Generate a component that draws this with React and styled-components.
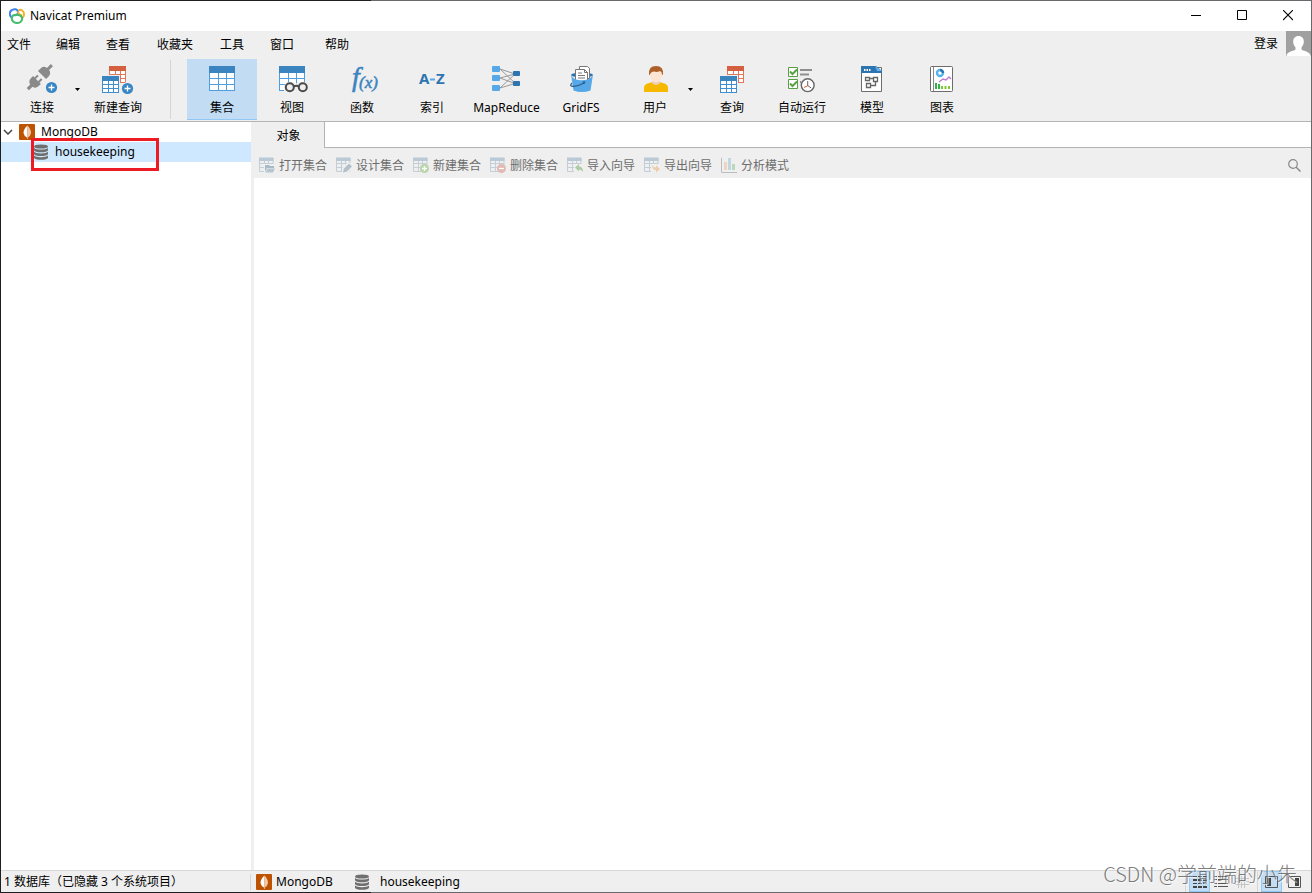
import React, { useState } from 'react';
import styled, { createGlobalStyle } from 'styled-components';

const MENUS = ['文件', '编辑', '查看', '收藏夹', '工具', '窗口', '帮助'];

function Table({ x, y, w, h, head, line, color, headColor }) {
  const rows = (h - head) / 3;
  const cols = w / 3;
  return (
    <g shapeRendering="crispEdges">
      <rect x={x} y={y} width={w} height={h} fill={color} />
      {[0, 1, 2].map((r) =>
        [0, 1, 2].map((c) => (
          <rect
            key={`${r}-${c}`}
            x={x + c * cols + line}
            y={y + head + r * rows}
            width={cols - line * (c === 2 ? 2 : 1)}
            height={rows - line}
            fill="#fff"
          />
        ))
      )}
      <rect x={x} y={y} width={w} height={head} fill={headColor} />
    </g>
  );
}

function PlusBadge({ x, y }) {
  return (
    <g>
      <circle cx={x} cy={y} r="5.6" fill="#3a86c4" />
      <path d={`M${x - 3} ${y}h6M${x} ${y - 3}v6`} stroke="#fff" strokeWidth="1.3" />
    </g>
  );
}

function QueryTables({ x }) {
  return (
    <g>
      <Table x={x + 7} y={3} w={17} h={17} head={5} line={1} color="#e2765a" headColor="#d4603f" />
      <rect x={x - 1} y={12} width={19} height={19} fill="#efefef" />
      <Table x={x} y={13} w={17} h={17} head={5} line={1} color="#3f8fd0" headColor="#3a84bf" />
    </g>
  );
}

function ConnectIcon() {
  return (
    <ToolSvg viewBox="0 0 32 32">
      <g transform="translate(11 17) rotate(-45)" fill="#8a8a8a">
        <path d="M0-5.5V5.5H-3.500A5 5 0 0 1-8 1.600H-13V-1.600H-8A5 5 0 0 1-3.500-5.500zM-.5-3.600H4v2H-.5zM-.5 1.600H4v2H-.5z" />
      </g>
      <g transform="translate(16 12) rotate(-45)" fill="#8a8a8a">
        <path d="M0-5.700V5.700H4A5 5 0 0 0 8.500 1.500H14V-1.500H8.500A5 5 0 0 0 4-5.700z" />
      </g>
      <PlusBadge x={25.500} y={24.500} />
    </ToolSvg>
  );
}

function NewQueryIcon() {
  return (
    <ToolSvg viewBox="0 0 32 32">
      <QueryTables x={0} />
      <circle cx="25.500" cy="25.500" r="6.500" fill="#efefef" />
      <PlusBadge x={25.500} y={25.500} />
    </ToolSvg>
  );
}

function CollectionIcon() {
  return (
    <ToolSvg viewBox="0 0 32 32">
      <Table x={3} y={3} w={26} h={25} head={7} line={1} color="#4f9edf" headColor="#3a84bf" />
    </ToolSvg>
  );
}

function ViewIcon() {
  return (
    <ToolSvg viewBox="0 0 32 32">
      <Table x={3} y={3} w={26} h={25} head={7} line={1} color="#4f9edf" headColor="#3a84bf" />
      <path d="M8 29v-6l3-4h6l2.500 2 2.500-2h8v10z" fill="#efefef" />
      <g fill="#efefef" stroke="#4a4a4a" strokeWidth="2">
        <circle cx="13.800" cy="24.300" r="4" />
        <circle cx="26.800" cy="24.300" r="4" />
        <path d="M17.800 23.500q2.500-1.500 5 0" />
      </g>
    </ToolSvg>
  );
}

function FunctionIcon() {
  return (
    <ToolSvg viewBox="0 0 32 32" fill="#3a84bf" stroke="#3a84bf" strokeWidth="0.500">
      <SerifText x="6" y="23" fontSize="28">f</SerifText>
      <SerifText x="13" y="25" fontSize="17">(x)</SerifText>
    </ToolSvg>
  );
}

function IndexIcon() {
  return (
    <ToolSvg viewBox="0 0 32 32" fill="#2d75b0">
      <SansText x="3" y="21" fontSize="15">A</SansText>
      <path d="M14 16.500h5" stroke="#56a8e8" strokeWidth="2" />
      <SansText x="20" y="21" fontSize="15">Z</SansText>
    </ToolSvg>
  );
}

function MapReduceIcon() {
  return (
    <ToolSvg viewBox="0 0 32 32">
      <path
        d="M9 6l15 5M9 6l15 14M9 15l15-4M9 15l15 5.500M9 25l15-14M9 25l15-4.500"
        stroke="#999"
        fill="none"
      />
      <g fill="#56a8e8">
        <rect x="1" y="3" width="8" height="6" rx="1" />
        <rect x="1" y="12" width="8" height="6" rx="1" />
        <rect x="1" y="22" width="8" height="6" rx="1" />
      </g>
      <g fill="#2d75b0">
        <rect x="22" y="8" width="7" height="5" rx="1" />
        <rect x="22" y="18" width="7" height="5" rx="1" />
      </g>
    </ToolSvg>
  );
}

function GridFsIcon() {
  return (
    <ToolSvg viewBox="0 0 32 32">
      <ellipse cx="17" cy="12" rx="11" ry="2.500" fill="#2d75b0" />
      <g fill="#fff" stroke="#777">
        <path d="M14.500 3.500h8l2 2v10h-10z" />
        <path d="M10.500 6.500h9l3 3v9h-12z" />
        <path d="M19.500 6.500v3h3M13 10h4M13 12.500h7M13 15h7" fill="none" />
      </g>
      <path d="M6 11.500c1 3 3 4 5 5 3 1 8 1 11.500 0 2-1 4-2 5.500-5l-2.500 16q-8.500 3-17 0z" fill="#56a8e8" />
      <path d="M7 20c-5 5 5 4 12 0" fill="none" stroke="#2d5f8a" strokeWidth="1.200" />
      <circle cx="19" cy="19.500" r="1.300" fill="#2d5f8a" />
    </ToolSvg>
  );
}

function UserIcon() {
  return (
    <ToolSvg viewBox="0 0 32 32">
      <path d="M5 29v-4q0-4 5-5l4-1h6l4 1q5 1 5 5v4z" fill="#f6b900" />
      <path d="M13 16h8v4q-4 4-8 0z" fill="#f0cdb5" />
      <path d="M11 7h12v6q-1 6.500-6 6.500T11 13z" fill="#fde4d3" />
      <path d="M10 12q-1-9 7-9t7 9l-1-.5q0-3-2-3.500-3 1.500-6 .5-3 0-4 3z" fill="#ad6129" />
    </ToolSvg>
  );
}

function QueryIcon() {
  return (
    <ToolSvg viewBox="0 0 32 32">
      <QueryTables x={4} />
    </ToolSvg>
  );
}

function AutomationIcon() {
  return (
    <ToolSvg viewBox="0 0 32 32" fill="none">
      <g stroke="#58a043">
        <path d="M2.500 4.500h9v9h-9zM2.500 16.500h9v9h-9z" fill="#fff" />
        <path d="M4 8.500l2.500 2.500 4.500-4.500M4 20.500l2.500 2.500 4.500-4.500" strokeWidth="2" />
      </g>
      <path d="M14 7h12M14 11.500h9M14 19h3" stroke="#8f8f8f" strokeWidth="2" />
      <circle cx="21.700" cy="22.200" r="7.500" fill="#efefef" />
      <circle cx="21.700" cy="22.200" r="6.400" fill="#fff" stroke="#666" strokeWidth="1.400" />
      <path d="M21.700 18v4.500l3.500 2.500" stroke="#666" />
      <path d="M22 22.500l-4 2" stroke="#e0533c" />
    </ToolSvg>
  );
}

function ModelIcon() {
  return (
    <ToolSvg viewBox="0 0 32 32" fill="none">
      <path d="M5.500 4.500h20v24h-20z" fill="#fff" stroke="#6d6d6d" />
      <path d="M5 3h15l6 5v2H5z" fill="#2d75b0" />
      <path d="M19 3l7 5h-5z" fill="#63b3f0" />
      <path d="M8 7h1.500M10.500 7H12M13 7h1.500" stroke="#fff" strokeWidth="2" />
      <path
        d="M9.500 14.500h4v3h-4zM17.500 14.500h4v4h-4zM10.500 20.500h4v4h-4zM13.500 15.500h4M15 22.500h4.500v-4"
        stroke="#666"
        strokeWidth="1.300"
      />
    </ToolSvg>
  );
}

function ChartIcon() {
  return (
    <ToolSvg viewBox="0 0 32 32" fill="none">
      <rect x="4.500" y="3.500" width="22" height="25" rx="1" fill="#fff" stroke="#6d6d6d" />
      <path d="M7.500 4v24" stroke="#8a8a8a" />
      <circle cx="14" cy="10" r="3" stroke="#56b4ee" strokeWidth="2.400" />
      <path d="M14 7a3 3 0 0 1 3 3" stroke="#2d75b0" strokeWidth="2.400" />
      <path d="M13 19l4-3 3 1 3-3 2 2" stroke="#c178d0" strokeWidth="1.400" />
      <path d="M10 26v-6M13 26v-5" stroke="#2fb34a" strokeWidth="2" />
      <path d="M16 26v-3M19.500 26v-3M23 26v-3" stroke="#79cc2c" strokeWidth="2" />
    </ToolSvg>
  );
}

function MongoIcon() {
  return (
    <SmallSvg viewBox="0 0 16 16">
      <rect width="16" height="16" rx="1" fill="#bd5200" />
      <path d="M8.500 1.500Q4.500 5 4.500 9q.5 3 3.500 4.500V15h.5z" fill="#fff" />
      <path d="M8.500 1.500Q12 5 12 9q-.5 3-3.200 4.500L8.500 15z" fill="#f3c8a8" />
    </SmallSvg>
  );
}

function DatabaseIcon() {
  return (
    <SmallSvg viewBox="0 0 16 16" fill="#6f6f6f">
      <path d="M1 2.500Q1 .5 8 .5t7 2-7 2-7-2z" />
      <path d="M1 4q2 1.600 7 1.600T15 4v2.300q-1 2-7 2t-7-2z" />
      <path d="M1 7.800q2 1.600 7 1.600t7-1.600v2.300q-1 2-7 2t-7-2z" />
      <path d="M1 11.600q2 1.600 7 1.600t7-1.600v2.100q-1 2-7 2t-7-2z" />
    </SmallSvg>
  );
}

// every object action shares the faded table, only the corner mark differs
function ActionIcon({ mark }) {
  if (mark === 'analyse') {
    return (
      <SmallSvg viewBox="0 0 16 16">
        <path d="M.5 1v14.500H16" fill="none" stroke="#bcbcbc" />
        <path d="M3 5h3v8H3z" fill="#efd5bf" />
        <path d="M7 1h3v12H7z" fill="#bfd6e3" />
        <path d="M11 7h3v6h-3z" fill="#bcd8ba" />
      </SmallSvg>
    );
  }
  return (
    <SmallSvg viewBox="0 0 16 16">
      <path d="M.5 1v13.500H14V1M.5 10.500H14M5.500 3v11.500M9.500 3v11.500M.5 6.500H14" fill="none" stroke="#c3ced6" />
      <path d="M0 .5h14.500V4H0z" fill="#b9c9d5" />
      {mark === 'open' && (
        <g>
          <path d="M5 7h11v9H5z" fill="#efefef" />
          <path d="M6 8h4l1 1h4v2H8l-2 4z" fill="#a8bac6" />
          <path d="M8.500 11.500H16L14 15.500H6.500z" fill="#b5c6d2" />
        </g>
      )}
      {mark === 'design' && (
        <g>
          <path d="M6 16v-5l5-5h5v6l-4 4z" fill="#efefef" />
          <path d="M7 15.500l1-4 5-5 3 3-5 5z" fill="#b3c0ca" />
        </g>
      )}
      {mark === 'new' && (
        <g>
          <circle cx="11.500" cy="11.500" r="4.500" fill="#b9d5a9" />
          <path d="M9 11.500h5M11.500 9v5" stroke="#fff" strokeWidth="1.300" />
        </g>
      )}
      {mark === 'delete' && (
        <g>
          <circle cx="11.500" cy="11.500" r="4.500" fill="#e3b9b4" />
          <path d="M9 11.500h5" stroke="#fff" strokeWidth="1.300" />
        </g>
      )}
      {mark === 'import' && (
        <g>
          <path d="M7 7h9v9H7z" fill="#efefef" />
          <path d="M8 10.500l4-3.500v2.500q4 0 4 5.500-1-2.500-4-2.500v2z" fill="#aecba3" />
        </g>
      )}
      {mark === 'export' && (
        <g>
          <path d="M7 7h9v9H7z" fill="#efefef" />
          <path d="M16 12l-4 3.500V13q-4 0-4-5 1 2.500 4 2.500v-2z" fill="#ecccaa" />
        </g>
      )}
    </SmallSvg>
  );
}

const TOOLS = [
  { label: '集合', icon: CollectionIcon },
  { label: '视图', icon: ViewIcon },
  { label: '函数', icon: FunctionIcon },
  { label: '索引', icon: IndexIcon },
  { label: 'MapReduce', icon: MapReduceIcon, width: 79 },
  { label: 'GridFS', icon: GridFsIcon },
  { label: '用户', icon: UserIcon, split: true },
  { label: '查询', icon: QueryIcon },
  { label: '自动运行', icon: AutomationIcon },
  { label: '模型', icon: ModelIcon },
  { label: '图表', icon: ChartIcon },
];

const ACTIONS = [
  { label: '打开集合', mark: 'open' },
  { label: '设计集合', mark: 'design' },
  { label: '新建集合', mark: 'new' },
  { label: '删除集合', mark: 'delete' },
  { label: '导入向导', mark: 'import' },
  { label: '导出向导', mark: 'export' },
  { label: '分析模式', mark: 'analyse' },
];

function SplitTool({ label, icon: Icon }) {
  return (
    <SplitGroup>
      <ToolButton $width={66}>
        <Icon />
        <ToolLabel>{label}</ToolLabel>
      </ToolButton>
      <CaretButton aria-label={`${label} ▾`}>
        <svg width="5" height="3" viewBox="0 0 5 3"><path d="M0 0h5L2.500 3z" /></svg>
      </CaretButton>
    </SplitGroup>
  );
}

function App() {
  const [tool, setTool] = useState('集合');

  return (
    <Frame>
      <GlobalStyle />
      <TitleBar>
        <SmallSvg viewBox="0 0 16 16" fill="none" strokeWidth="2">
          <path d="M3 9.500C0 8 0 3.500 3 2c2.500-1.500 5.500-1 6 2 .3 2-1.500 3-3 3.500" stroke="#3f84f0" />
          <path d="M9.500 2.500C12 .8 15 3 15 6c0 2-1 3.500-2.500 4M9 3.500c0 2 2 3.500 4 4" stroke="#f3b32c" />
          <path d="M4 7.500C1.500 10 3 15 8 15c4.500 0 6.500-4 4-7-2-1-5.500-1.500-8-.5z" stroke="#43bd6b" />
        </SmallSvg>
        <AppName>Navicat Premium</AppName>
        <WindowButton aria-label="最小化">
          <svg width="10" height="12"><path d="M0 5.500h10" stroke="#000" /></svg>
        </WindowButton>
        <WindowButton aria-label="最大化">
          <svg width="10" height="12"><path d="M.5.5h9v9h-9z" fill="none" stroke="#000" /></svg>
        </WindowButton>
        <WindowButton aria-label="关闭">
          <svg width="10" height="12"><path d="M0 0l10 10M10 0L0 10" stroke="#000" strokeWidth="1.100" /></svg>
        </WindowButton>
      </TitleBar>

      <MenuBar>
        <MenuList>
          {MENUS.map((menu) => (
            <MenuButton key={menu}>{menu}</MenuButton>
          ))}
        </MenuList>
        <MenuButton>登录</MenuButton>
        <Avatar viewBox="0 0 25 25">
          <rect width="25" height="25" fill="#a0a0a0" />
          <path d="M12.500 5c3.500 0 5.500 2.500 5.300 6-.1 2.500-1.300 4-2.300 5.500v2c1 1.500 7.500 1.500 9 5.500v1h-24v-1c1.500-4 8-4 9-5.500v-2c-1-1.500-2.200-3-2.300-5.500C7 7.500 9 5 12.500 5z" fill="#fff" />
        </Avatar>
      </MenuBar>

      <Toolbar>
        <SplitTool label="连接" icon={ConnectIcon} />
        <ToolButton $width={68}>
          <NewQueryIcon />
          <ToolLabel>新建查询</ToolLabel>
        </ToolButton>
        <ToolDivider />
        {TOOLS.map(({ label, icon: Icon, width, split }) =>
          split ? (
            <SplitTool key={label} label={label} icon={Icon} />
          ) : (
            <ToolButton
              key={label}
              $width={width}
              $active={tool === label}
              aria-pressed={tool === label}
              onClick={() => setTool(label)}
            >
              <Icon />
              <ToolLabel>{label}</ToolLabel>
            </ToolButton>
          )
        )}
      </Toolbar>

      <Body>
        <Sidebar>
          <TreeRow $level={0}>
            <Chevron viewBox="0 0 10 6"><path d="M1 1l4 4 4-4" fill="none" stroke="#444" strokeWidth="1.500" /></Chevron>
            <MongoIcon />
            <span>MongoDB</span>
          </TreeRow>
          <TreeRow $level={1} $selected>
            <DatabaseIcon />
            <span>housekeeping</span>
          </TreeRow>
          <Highlight />
        </Sidebar>

        <Content>
          <TabStrip>
            <Tab>对象</Tab>
            <TabFiller />
          </TabStrip>
          <ActionBar>
            {ACTIONS.map(({ label, mark }) => (
              <ActionButton key={label}>
                <ActionIcon mark={mark} />
                <ActionLabel>{label}</ActionLabel>
              </ActionButton>
            ))}
            <SearchButton aria-label="搜索">
              <svg width="13" height="13" fill="none" stroke="#8a8a8a">
                <circle cx="5" cy="5" r="4.300" strokeWidth="1.200" />
                <path d="M8 8l4.500 4.500" strokeWidth="1.500" />
              </svg>
            </SearchButton>
          </ActionBar>
          <ObjectPane />
        </Content>
      </Body>

      <StatusBar>
        <StatusSummary>1 数据库（已隐藏 3 个系统项目）</StatusSummary>
        <StatusPath>
          <MongoIcon />
          <span>MongoDB</span>
        </StatusPath>
        <StatusPath $wide>
          <DatabaseIcon />
          <span>housekeeping</span>
        </StatusPath>
        <ViewSwitch>
          <StatusButton $active aria-label="列表">
            <svg width="14" height="13" stroke="#444" fill="none">
              <path d="M0 1.500h4M5 1.500h4M10 1.500h4M0 8.500h4M5 8.500h4M10 8.500h4" strokeWidth="1" />
              <path d="M0 5h4M5 5h4M10 5h4M0 12h4M5 12h4M10 12h4" strokeWidth="2" />
            </svg>
          </StatusButton>
          <StatusButton aria-label="详细信息">
            <svg width="14" height="13" stroke="#555" fill="none">
              <path d="M0 1.500h3M4 1.500h10M0 4.500h3M4 4.500h10M0 8.500h3M4 8.500h10M0 11.500h3M4 11.500h10" />
            </svg>
          </StatusButton>
          <StatusButton aria-label="ER 图表">
            <svg width="14" height="13" stroke="#c4c4c4" fill="none">
              <path d="M0 3.500h14M0 9.500h14M3.500 0v13M9.500 0v13M0 6.500h14M6.500 0v13" />
            </svg>
          </StatusButton>
        </ViewSwitch>
        <ViewSwitch>
          <StatusButton $active aria-label="导航窗格">
            <svg width="13" height="12"><path d="M.5.500h12v11H.5z" fill="none" stroke="#555" /><path d="M2 2h4v8H2z" fill="#444" /></svg>
          </StatusButton>
          <StatusButton aria-label="信息窗格">
            <svg width="13" height="12"><path d="M.5.500h12v11H.5z" fill="none" stroke="#555" /><path d="M7 2h4v8H7z" fill="#444" /></svg>
          </StatusButton>
        </ViewSwitch>
      </StatusBar>
      <Watermark>CSDN @学前端的小朱</Watermark>
    </Frame>
  );
}

const GlobalStyle = createGlobalStyle`
  * {
    box-sizing: border-box;
  }

  body {
    margin: 0;
    font-family: 'Noto Sans', 'Noto Sans CJK SC', sans-serif;
    font-size: 12px;
    line-height: 16px;
    color: #000;
  }

  button {
    padding: 0;
    border: 0;
    background: none;
    font: inherit;
    color: inherit;
    white-space: nowrap;
  }

  svg {
    display: block;
    flex: none;
  }
`;

const Frame = styled.div`
  position: relative;
  display: flex;
  flex-direction: column;
  min-height: 100vh;
  padding: 1px;
  background: linear-gradient(90deg, #1f1f22 371px, #68696d 371px);
`;

const ToolSvg = styled.svg`
  width: 32px;
  height: 32px;
  overflow: visible;
`;

const SmallSvg = styled.svg`
  width: 16px;
  height: 16px;
`;

const SerifText = styled.text`
  font-family: 'Liberation Serif', serif;
  font-style: italic;
`;

const SansText = styled.text`
  font-family: 'Noto Sans', sans-serif;
  font-weight: 700;
`;

const TitleBar = styled.header`
  display: flex;
  align-items: center;
  height: 30px;
  padding-left: 8px;
  background: #fff;
`;

const AppName = styled.h1`
  flex: 1;
  margin: 0 0 0 5px;
  font-size: 12px;
  font-weight: 400;
`;

const WindowButton = styled.button`
  display: flex;
  align-items: center;
  justify-content: center;
  width: 46px;
  height: 30px;

  &:hover {
    background: #e5e5e5;
  }
`;

const MenuBar = styled.nav`
  display: flex;
  align-items: center;
  gap: 8px;
  height: 26px;
  padding-left: 6px;
  background: #efefef;
`;

const MenuList = styled.div`
  flex: 1;
  display: grid;
  grid-template-columns: 49px 50px 51px 63px 50px 55px auto;
  justify-content: start;
  padding-top: 2px;
`;

const MenuButton = styled.button`
  text-align: left;
`;

const Avatar = styled.svg`
  align-self: flex-start;
  width: 25px;
  height: 25px;
`;

const Toolbar = styled.div`
  display: flex;
  padding: 2px 0 1px 2px;
  border-bottom: 1px solid #b4b4b4;
  background: #efefef;
`;

const ToolButton = styled.button`
  display: flex;
  flex-direction: column;
  align-items: center;
  gap: 5px;
  width: ${({ $width = 70 }) => $width}px;
  height: 61px;
  padding-top: 4px;
  border-bottom: 1px solid ${({ $active }) => ($active ? '#90c8f6' : 'transparent')};
  background: ${({ $active }) => ($active ? '#c1dcf3' : 'none')};
`;

const ToolLabel = styled.span`
  line-height: 16px;
`;

const SplitGroup = styled.div`
  display: flex;
  padding: 0 3px 0 6px;
`;

const CaretButton = styled.button`
  width: 6px;
  height: 61px;
`;

const ToolDivider = styled.div`
  width: 1px;
  margin: 1px 16px 1px 18px;
  background: #d5d5d5;
`;

const Body = styled.div`
  flex: 1;
  display: flex;
`;

const Sidebar = styled.aside`
  position: relative;
  width: 250px;
  background: #fff;
`;

const TreeRow = styled.div`
  display: flex;
  align-items: center;
  gap: 6px;
  height: 20px;
  padding-left: ${({ $level }) => ($level ? 32 : 2)}px;
  background: ${({ $selected }) => ($selected ? '#cde8ff' : 'none')};
`;

const Chevron = styled.svg`
  width: 10px;
  height: 6px;
`;

const Highlight = styled.div`
  position: absolute;
  top: 16px;
  left: 30px;
  width: 128px;
  height: 33px;
  border: 3px solid #ed1c24;
`;

const Content = styled.main`
  flex: 1;
  display: flex;
  flex-direction: column;
  background: #efefef;
`;

const TabStrip = styled.div`
  display: flex;
  height: 26px;
`;

const Tab = styled.button`
  width: 73px;
  padding: 2px 0 0 2px;
`;

const TabFiller = styled.div`
  flex: 1;
  border-left: 1px solid #b4b4b4;
  border-bottom: 1px solid #b4b4b4;
  background: #fff;
`;

const ActionBar = styled.div`
  display: flex;
  align-items: center;
  gap: 9px;
  height: 30px;
  padding: 4px 10px 0 8px;
`;

const ActionButton = styled.button`
  display: flex;
  align-items: center;
  gap: 4px;
  color: #6d6d6d;
`;

const ActionLabel = styled.span`
  padding-top: 2px;
`;

const SearchButton = styled.button`
  margin-left: auto;
`;

const ObjectPane = styled.section`
  flex: 1;
  margin-left: 3px;
  background: #fff;
`;

const StatusBar = styled.footer`
  display: flex;
  align-items: center;
  height: 22px;
  padding-right: 6px;
  border-top: 1px solid #d7d7d7;
  background: #efefef;
`;

const StatusSummary = styled.div`
  width: 250px;
  padding-left: 3px;
  border-right: 1px solid #d5d5d5;
`;

const StatusPath = styled.div`
  display: flex;
  align-items: center;
  gap: ${({ $wide }) => ($wide ? 10 : 4)}px;
  min-width: 98px;
  padding-left: 5px;
`;

const ViewSwitch = styled.div`
  display: flex;
  margin-left: 5px;
  padding-left: 3px;
  border-left: 1px solid #d5d5d5;

  ${StatusPath} + & {
    margin-left: auto;
  }

  & + & {
    gap: 2px;
  }
`;

const StatusButton = styled.button`
  display: flex;
  align-items: center;
  justify-content: center;
  width: 21px;
  height: 21px;
  border: 1px solid ${({ $active }) => ($active ? '#90c8f6' : 'transparent')};
  background: ${({ $active }) => ($active ? '#c1dcf3' : 'none')};
`;

const Watermark = styled.div`
  position: absolute;
  right: 15px;
  bottom: 5px;
  font-family: 'Noto Sans CJK SC', sans-serif;
  font-size: 20px;
  font-weight: 300;
  line-height: 28px;
  color: rgba(90, 90, 90, 0.8);
  text-shadow: 1px 1px 1px rgba(255, 255, 255, 0.8);
  pointer-events: none;
`;

export default App;
